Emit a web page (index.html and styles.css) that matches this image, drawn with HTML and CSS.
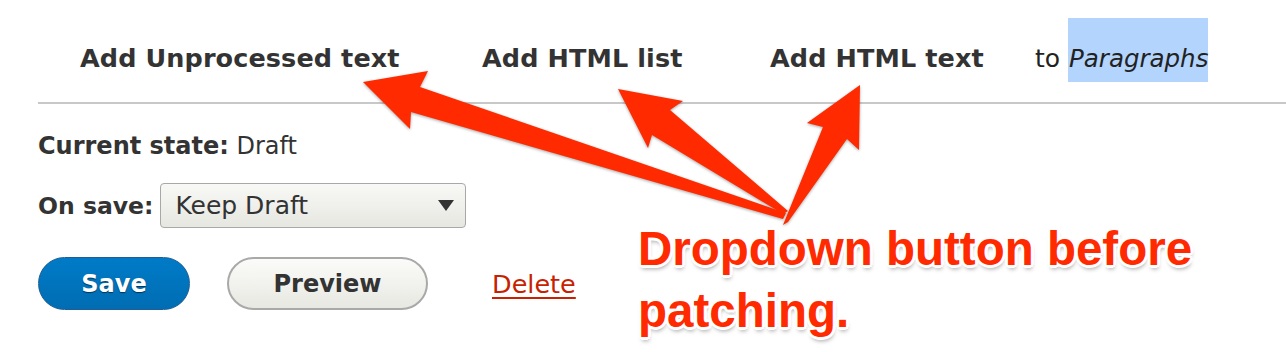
FILE: index.html
```html
<!DOCTYPE html>
<html lang="en">
<head>
<meta charset="utf-8">
<title>Dropdown button before patching</title>
<link rel="stylesheet" href="styles.css">
</head>
<body>
<div class="page">
  <div class="tabs">
    <span class="tab tab-a">Add Unprocessed text</span>
    <span class="tab tab-b">Add HTML list</span>
    <span class="tab tab-c">Add HTML text</span>
    <span class="to">to <span class="sel">Paragraphs</span></span>
  </div>
  <div class="rule"></div>
  <div class="form">
    <p class="state"><b>Current state:</b> Draft</p>
    <div class="onsave">
      <label class="label">On save:</label>
      <div class="select">
        <span class="select-text">Keep Draft</span>
        <svg class="caret" width="16" height="11" viewBox="0 0 16 11"><polygon points="0,0 16,0 8,11" fill="#333"/></svg>
      </div>
    </div>
    <div class="actions">
      <button class="btn btn-primary">Save</button>
      <button class="btn btn-secondary">Preview</button>
      <a class="delete" href="#">Delete</a>
    </div>
  </div>
</div>
<svg class="arrows" width="1286" height="352" viewBox="0 0 1286 352">
  <g fill="#ff2a00">
    <polygon points="363,82 428,71 420,87 786,213 783,219 411,112 410,129"/>
    <polygon points="618,89 683,101 670,110 788,211 783,214 652,135 648,148"/>
    <polygon points="860,85 859,150 847,139 788,222 783,225 823,127 807,123"/>
  </g>
</svg>
<div class="note">Dropdown button before<br>patching.</div>
</body>
</html>
```

FILE: styles.css
```css
html, body {
  margin: 0;
  padding: 0;
  background: #fff;
}
body {
  width: 1286px;
  height: 352px;
  overflow: hidden;
  position: relative;
  font-family: "DejaVu Sans", Verdana, sans-serif;
  color: #333;
}
.tabs {
  display: flex;
  align-items: baseline;
  padding-top: 18px;
  padding-left: 80px;
  font-size: 25.5px;
}
.tab {
  font-weight: bold;
  color: #333;
  letter-spacing: 0.1px;
}
.tab-a { width: 402px; }
.tab-b { width: 288px; }
.tab-c { width: 265px; }
.to {
  font-size: 25px;
  color: #222;
}
.sel {
  display: inline-block;
  font-style: italic;
  font-size: 24.5px;
  background: #b3d4fc;
  padding: 26px 0 8px 1px;
  line-height: 30px;
}
.rule {
  margin: 20px 0 0 38px;
  border-top: 2px solid #c8c8c8;
}
.form {
  padding-left: 38px;
  font-size: 24px;
}
.state {
  margin: 27px 0 0 0;
  line-height: 30px;
}
.state b { color: #333; }
.onsave {
  display: flex;
  align-items: center;
  gap: 7px;
  margin-top: 22px;
}
.label {
  font-weight: bold;
  font-size: 23.5px;
}
.select {
  box-sizing: border-box;
  width: 306px;
  height: 45px;
  border: 1.5px solid #a8a8a8;
  border-radius: 4px;
  background: linear-gradient(#f8f8f6, #e7e7e1);
  display: flex;
  align-items: center;
  justify-content: space-between;
  padding: 0 11px 0 14px;
  font-size: 25px;
  color: #333;
}
.caret { display: block; }
.actions {
  display: flex;
  align-items: center;
  margin-top: 29px;
}
.btn {
  box-sizing: border-box;
  height: 53px;
  border-radius: 30px;
  font-family: "DejaVu Sans", Verdana, sans-serif;
  font-weight: bold;
  font-size: 24px;
  padding: 0;
  cursor: pointer;
}
.btn-primary {
  width: 152px;
  color: #fff;
  background: linear-gradient(#007bc7, #006db3);
  border: 1.5px solid #1f5d94;
  text-shadow: 0 1px 1px rgba(0,0,0,0.55);
}
.btn-secondary {
  width: 201px;
  margin-left: 37px;
  color: #333;
  background: linear-gradient(#fbfbf9, #e8e8e2);
  border: 2px solid #a9a9a9;
}
.delete {
  margin-left: 64px;
  color: #c72100;
  font-size: 25.5px;
  text-decoration: underline;
  text-underline-offset: 4px;
  text-decoration-thickness: 2px;
}
.arrows {
  position: absolute;
  left: 0;
  top: 0;
  pointer-events: none;
  filter: drop-shadow(0 1px 1.5px rgba(0,0,0,0.35));
}
.note {
  position: absolute;
  left: 638px;
  top: 218px;
  font-family: "Liberation Sans", Arial, sans-serif;
  font-weight: bold;
  font-size: 47.5px;
  line-height: 62px;
  color: #ff2a00;
  white-space: nowrap;
  text-shadow:
    -2px -2px 0 #fff, 2px -2px 0 #fff, -2px 2px 0 #fff, 2px 2px 0 #fff,
    0 -3px 0 #fff, 0 3px 0 #fff, -3px 0 0 #fff, 3px 0 0 #fff,
    1px 4px 4px rgba(0,0,0,0.35);
}
```
